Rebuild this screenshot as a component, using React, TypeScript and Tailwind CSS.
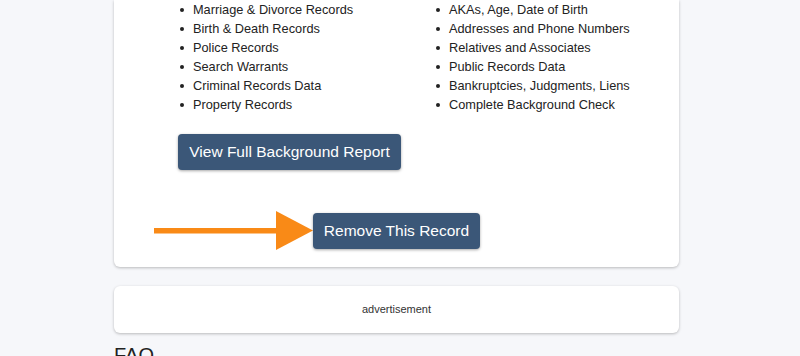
import React from 'react';

const leftItems = [
    'Marriage & Divorce Records',
    'Birth & Death Records',
    'Police Records',
    'Search Warrants',
    'Criminal Records Data',
    'Property Records',
];

const rightItems = [
    'AKAs, Age, Date of Birth',
    'Addresses and Phone Numbers',
    'Relatives and Associates',
    'Public Records Data',
    'Bankruptcies, Judgments, Liens',
    'Complete Background Check',
];

const BulletList: React.FC<{ items: string[] }> = ({ items }) => (
    <ul className="flex flex-col">
        {items.map((item) => (
            <li key={item} className="flex items-center h-[19px] text-[12.75px] text-[#222]">
                <span className="w-[4px] h-[4px] rounded-full bg-[#222] ml-[2px] mr-[9px]" />
                {item}
            </li>
        ))}
    </ul>
);

const App: React.FC = () => {
    return (
        <div className="w-[800px] h-[356px] overflow-hidden bg-[#f6f7fa]" style={{ fontFamily: '"Liberation Sans", Arial, sans-serif' }}>
            <div className="ml-[114px] w-[565px]">
                {/* Result card */}
                <div className="bg-white rounded-b-md shadow-[0_1px_3px_rgba(0,0,0,0.25)] pb-[16px]">
                    <div className="grid grid-cols-[256px_256px] pl-[64px]">
                        <BulletList items={leftItems} />
                        <BulletList items={rightItems} />
                    </div>

                    <div className="pl-[64px] mt-[20px]">
                        <button className="w-[223px] h-[36px] rounded-[4px] bg-[#3b5778] text-white text-[15.5px] shadow-[0_1px_3px_rgba(0,0,0,0.35)]">
                            View Full Background Report
                        </button>
                    </div>

                    <div className="flex items-center pl-[40px] mt-[41px]">
                        <svg width="159" height="40" viewBox="0 0 159 40" className="shrink-0">
                            <rect x="0" y="17" width="126" height="5.5" fill="#f98a17" />
                            <polygon points="122,0 159,19.5 122,39" fill="#f98a17" />
                        </svg>
                        <button className="w-[167px] h-[36px] rounded-[4px] bg-[#3b5778] text-white text-[15.5px] shadow-[0_1px_3px_rgba(0,0,0,0.35)]">
                            Remove This Record
                        </button>
                    </div>
                </div>

                {/* Advertisement */}
                <div className="mt-[19px] h-[47px] bg-white rounded-md shadow-[0_1px_3px_rgba(0,0,0,0.25)] flex items-center justify-center">
                    <span className="text-[11px] text-[#333]">advertisement</span>
                </div>

                <h2 className="mt-[8px] text-[20px] leading-[28px] text-[#222]">FAQ</h2>
            </div>
        </div>
    );
};

export default App;
